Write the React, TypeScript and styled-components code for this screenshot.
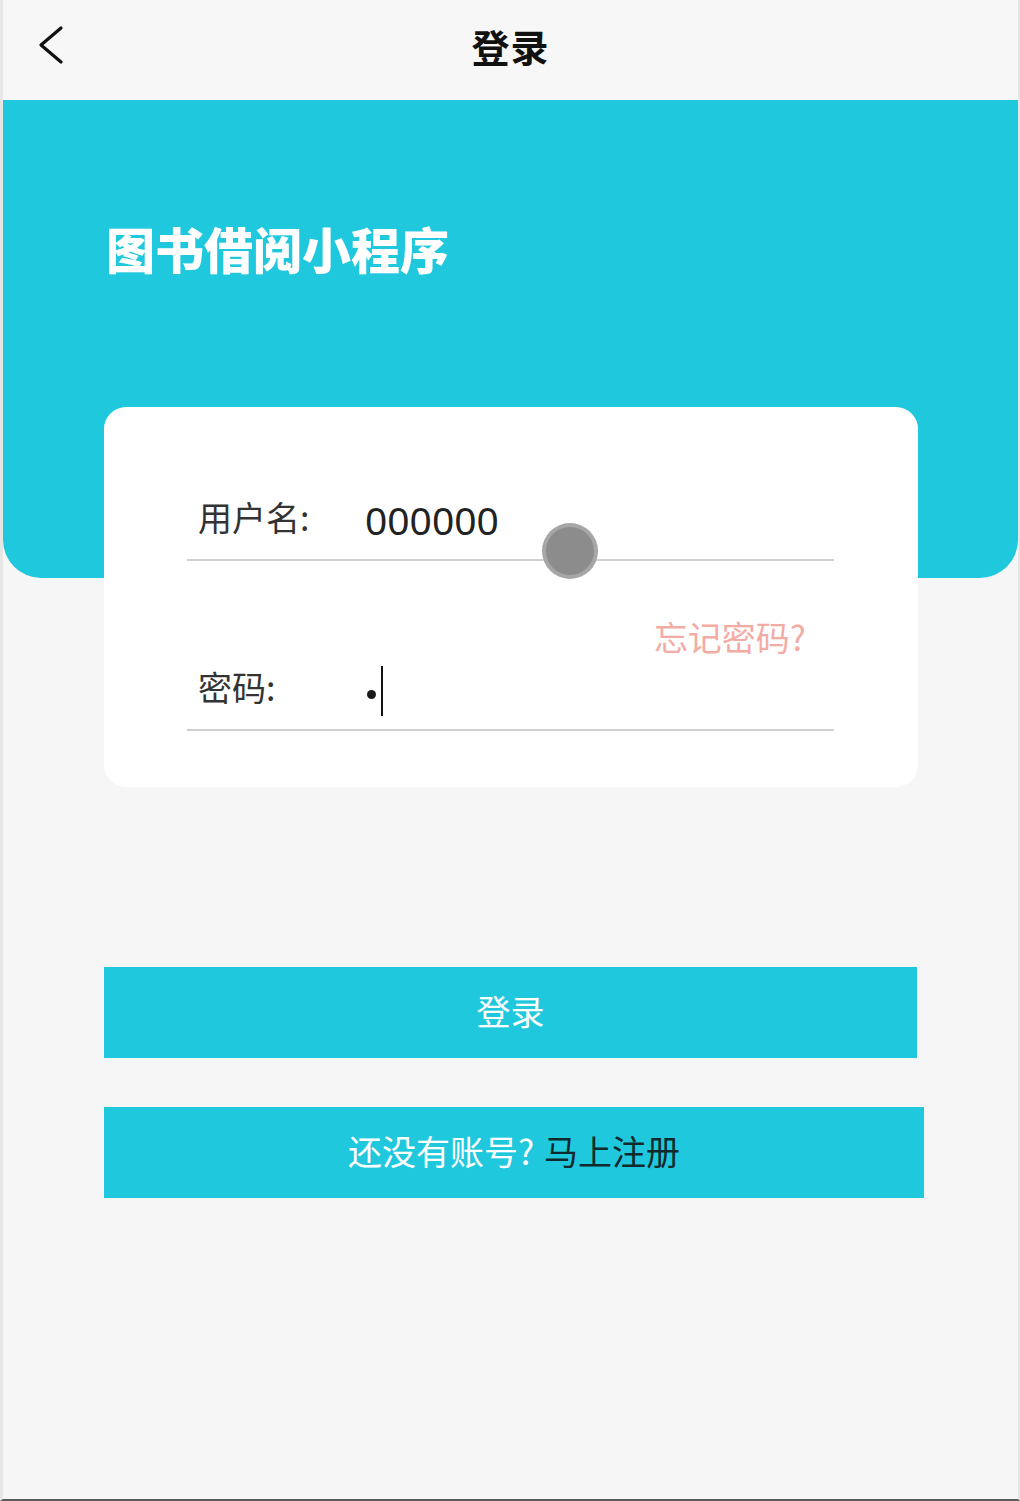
import styled, { createGlobalStyle } from "styled-components";

const GlobalStyle = createGlobalStyle`
  html, body {
    margin: 0;
    padding: 0;
    background: #f6f6f6;
  }
  body {
    font-family: "Noto Sans CJK SC", "Liberation Sans", sans-serif;
  }
`;

const Frame = styled.div`
  width: 1020px;
  height: 1501px;
  box-sizing: border-box;
  border-left: 3px solid #e6e6e6;
  border-right: 2px solid #e6e6e6;
  border-bottom: 2px solid #5b5b5b;
  background: #f6f6f6;
  display: flex;
  flex-direction: column;
`;

const Header = styled.header`
  height: 100px;
  background: #f7f7f7;
  display: grid;
  grid-template-columns: 1fr auto 1fr;
  align-items: center;
  padding: 0 32px;
`;

const BackButton = styled.div`
  width: 30px;
  height: 44px;
  display: flex;
  align-items: center;
  margin-top: -10px;
`;

const HeaderTitle = styled.h1`
  margin: -10px 0 0;
  font-size: 38px;
  font-weight: 700;
  color: #111;
  letter-spacing: 1px;
`;

const Banner = styled.section`
  height: 478px;
  box-sizing: border-box;
  background: #1fc8dc;
  border-radius: 0 0 38px 38px;
  padding: 117px 0 0 103px;
`;

const AppName = styled.h2`
  margin: 0;
  font-size: 49px;
  line-height: 62px;
  font-weight: 900;
  color: #fff;
`;

const Content = styled.main`
  padding: 0 101px;
  display: flex;
  flex-direction: column;
`;

const Card = styled.div`
  position: relative;
  width: 814px;
  height: 380px;
  box-sizing: border-box;
  margin-top: -171px;
  background: #fff;
  border-radius: 22px;
  padding: 80px 84px 0 83px;
  display: flex;
  flex-direction: column;
`;

const FieldRow = styled.div`
  height: 72px;
  display: flex;
  align-items: center;
  border-bottom: 2px solid #cfcfcf;
  padding-left: 11px;
`;

const Label = styled.span`
  width: 167px;
  font-size: 34px;
  color: #333;
  margin-bottom: 14px;
`;

const Value = styled.span`
  font-family: "Noto Sans", "Liberation Sans", sans-serif;
  font-size: 39px;
  color: #222;
  margin-top: -8px;
`;

const PasswordValue = styled.span`
  display: flex;
  align-items: center;
  margin-left: 2px;
`;

const Dot = styled.span`
  width: 9px;
  height: 9px;
  border-radius: 50%;
  background: #1a1a1a;
  margin-top: 2px;
`;

const Caret = styled.span`
  width: 2px;
  height: 50px;
  background: #111;
  margin: -4px 0 0 5px;
`;

const ForgotLink = styled.a`
  align-self: flex-end;
  margin: 56px 28px 0 0;
  font-size: 34px;
  line-height: 40px;
  color: #f2aca4;
`;

const TouchIndicator = styled.span`
  position: absolute;
  left: 438px;
  top: 116px;
  width: 56px;
  height: 56px;
  box-sizing: border-box;
  border-radius: 50%;
  background: #8c8c8c;
  border: 4px solid rgba(170, 170, 170, 0.85);
`;

const ActionButton = styled.button<{ $width: number; $top: number }>`
  width: ${(p) => p.$width}px;
  height: 91px;
  margin-top: ${(p) => p.$top}px;
  border: none;
  background: #1fc8dc;
  color: #fff;
  font-family: inherit;
  font-size: 34px;
  padding: 0 0 4px;
  display: flex;
  align-items: center;
  justify-content: center;
  cursor: pointer;
`;

const Emphasis = styled.span`
  color: #0f2a2c;
  margin-left: 10px;
`;

export default function App() {
  return (
    <>
      <GlobalStyle />
      <Frame>
        <Header>
          <BackButton>
            <svg width="30" height="40" viewBox="0 0 30 40" fill="none">
              <path
                d="M26 3 L6 20 L26 37"
                stroke="#111"
                strokeWidth="3.2"
                strokeLinecap="round"
                strokeLinejoin="round"
              />
            </svg>
          </BackButton>
          <HeaderTitle>登录</HeaderTitle>
          <div />
        </Header>

        <Banner>
          <AppName>图书借阅小程序</AppName>
        </Banner>

        <Content>
          <Card>
            <FieldRow>
              <Label>用户名:</Label>
              <Value>000000</Value>
            </FieldRow>
            <ForgotLink>忘记密码?</ForgotLink>
            <FieldRow>
              <Label>密码:</Label>
              <PasswordValue>
                <Dot />
                <Caret />
              </PasswordValue>
            </FieldRow>
            <TouchIndicator />
          </Card>

          <ActionButton $width={813} $top={180}>
            登录
          </ActionButton>
          <ActionButton $width={820} $top={49}>
            还没有账号?<Emphasis>马上注册</Emphasis>
          </ActionButton>
        </Content>
      </Frame>
    </>
  );
}
